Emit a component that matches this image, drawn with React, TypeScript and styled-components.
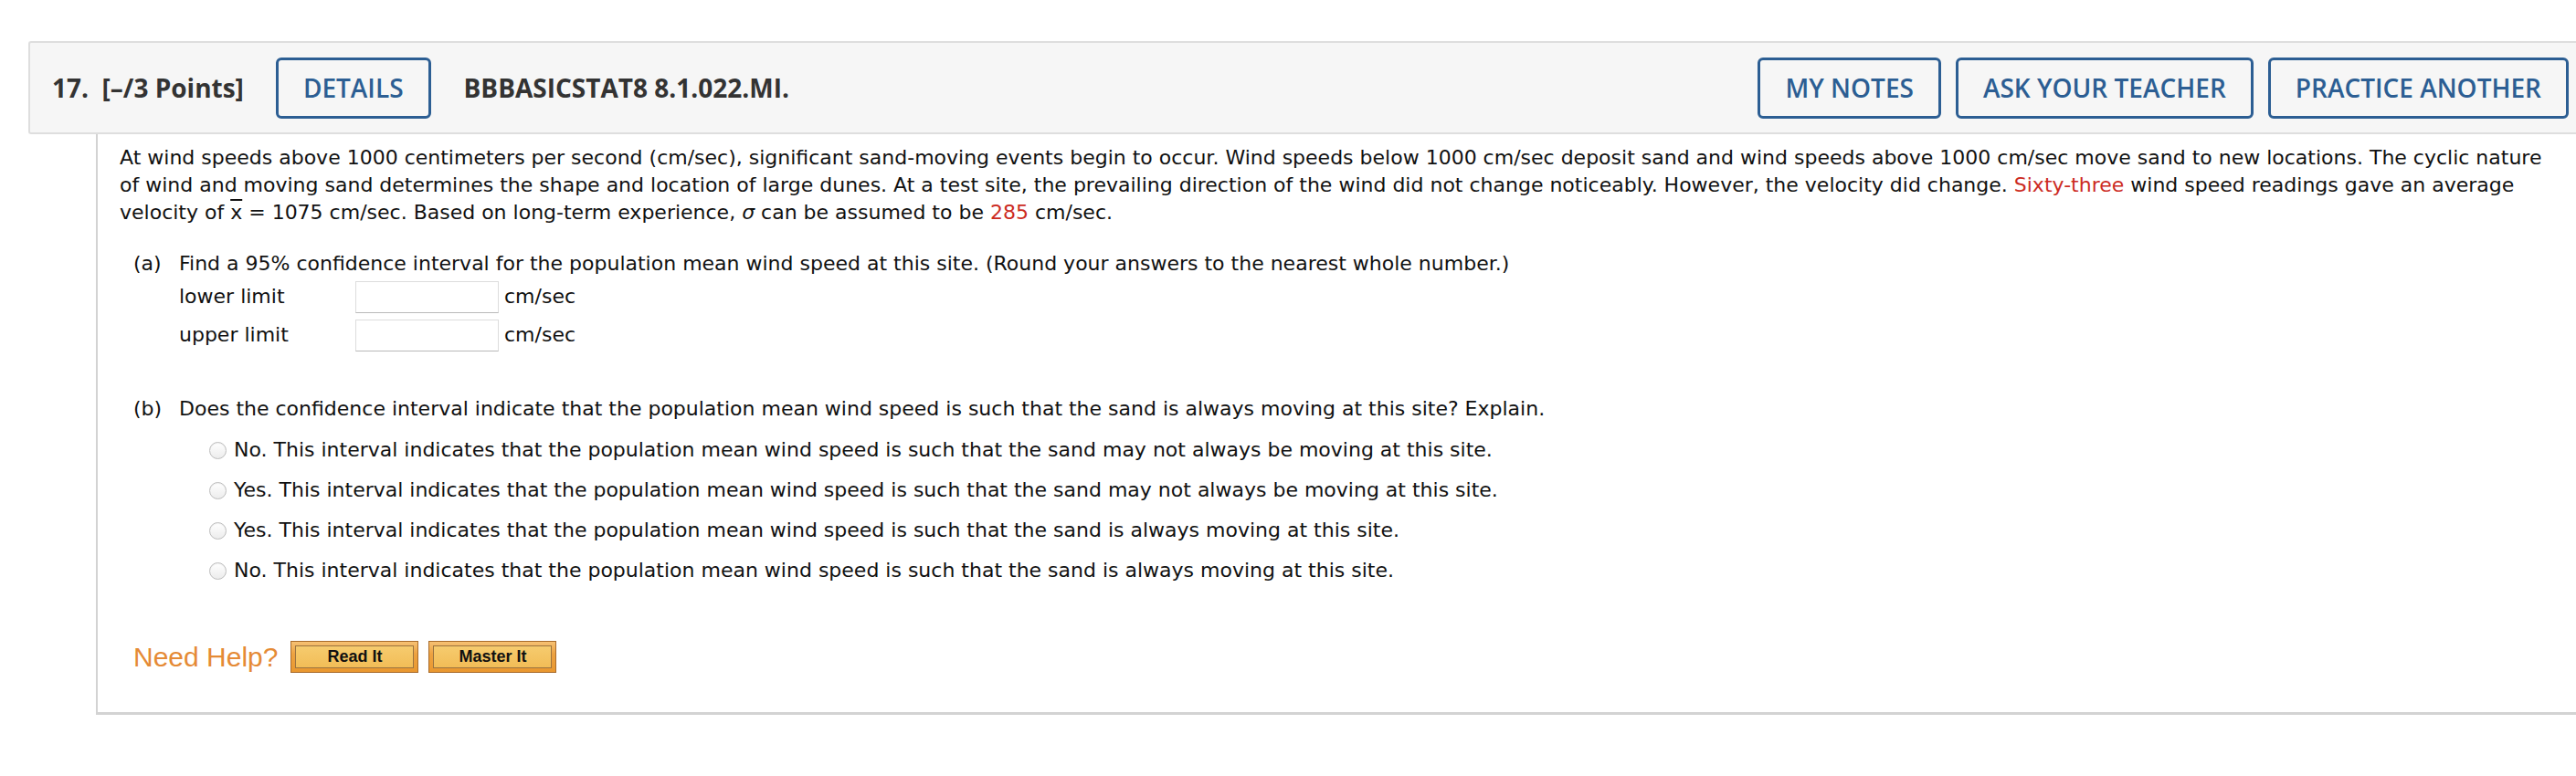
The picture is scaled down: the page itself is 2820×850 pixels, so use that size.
import React from "react";
import styled, { createGlobalStyle } from "styled-components";

const GlobalStyle = createGlobalStyle`
  html, body {
    margin: 0;
    padding: 0;
    background: #ffffff;
    overflow: hidden;
  }
`;

const Page = styled.div`
  width: 2840px;
  box-sizing: border-box;
  padding: 45px 0 0 31px;
`;

const Header = styled.div`
  display: flex;
  align-items: center;
  height: 102px;
  box-sizing: border-box;
  padding: 0 28px 0 24px;
  background: #f6f6f6;
  border: 2px solid #dedede;
  border-right: none;
  border-radius: 3px 0 0 3px;
  font-family: "Open Sans", "Liberation Sans", sans-serif;
  color: #333333;
`;

const QuestionNo = styled.span`
  font-size: 28px;
  font-weight: 700;
  white-space: pre;
`;

const Title = styled.span`
  margin-left: 36px;
  font-size: 28px;
  font-weight: 700;
`;

const Spacer = styled.div`
  flex: 1;
`;

const HeaderButton = styled.button<{ $first?: boolean }>`
  height: 67px;
  margin-left: ${(p) => (p.$first ? "35px" : "16px")};
  padding: 0 27px;
  background: transparent;
  border: 3px solid #2c5e93;
  border-radius: 6px;
  color: #2c5e93;
  font-family: "Open Sans", "Liberation Sans", sans-serif;
  font-size: 28px;
  font-weight: 600;
  text-transform: uppercase;
  cursor: pointer;
`;

const Body = styled.div`
  margin-left: 74px;
  padding: 11px 30px 43px 24px;
  border-left: 2px solid #d3d3d3;
  border-bottom: 3px solid #d3d3d3;
  font-family: "DejaVu Sans", Verdana, sans-serif;
  font-size: 22px;
  line-height: 30px;
  color: #111111;
`;

const Prose = styled.p`
  margin: 0;
`;

const Red = styled.span`
  color: #cc2b1f;
`;

const XBar = styled.span`
  text-decoration: overline;
`;

const Part = styled.div<{ $top: number }>`
  display: grid;
  grid-template-columns: 50px 1fr;
  margin: ${(p) => p.$top}px 0 0 15px;
`;

const PartLabel = styled.span``;

const PartBody = styled.div`
  display: flex;
  flex-direction: column;
`;

const AnswerRow = styled.div`
  display: flex;
  align-items: center;
  height: 42px;
`;

const AnswerLabel = styled.span`
  width: 193px;
`;

const AnswerInput = styled.input`
  width: 157px;
  height: 35px;
  box-sizing: border-box;
  margin: 0 6px 0 0;
  border: 1px solid #dddddd;
  border-bottom-color: #b9b9b9;
  background: #ffffff;
`;

const Choices = styled.div`
  display: flex;
  flex-direction: column;
  margin: 8px 0 0 33px;
`;

const Choice = styled.label`
  display: flex;
  align-items: center;
  height: 44px;
  gap: 8px;
`;

const Radio = styled.span`
  width: 19px;
  height: 19px;
  box-sizing: border-box;
  border-radius: 50%;
  border: 1px solid #bdbdbd;
  background: linear-gradient(#ffffff, #ececec);
  box-shadow: inset 0 1px 1px rgba(0, 0, 0, 0.06);
`;

const HelpRow = styled.div`
  display: flex;
  align-items: center;
  margin: 55px 0 0 15px;
`;

const HelpText = styled.span`
  font-family: "Liberation Sans", Arial, sans-serif;
  font-size: 30px;
  line-height: 35px;
  color: #e58a35;
  margin-right: 14px;
`;

const HelpButton = styled.button`
  width: 140px;
  height: 35px;
  margin-right: 11px;
  padding: 4px;
  box-sizing: border-box;
  background: linear-gradient(#f6c173, #eda241 40%, #e9982f);
  border: 1px solid #a86b2b;
  cursor: pointer;
`;

const HelpButtonFace = styled.span`
  display: flex;
  align-items: center;
  justify-content: center;
  height: 100%;
  box-sizing: border-box;
  background: linear-gradient(#f6cb6e, #f2bd57);
  border: 1px solid #9a7340;
  font-family: "Liberation Sans", Arial, sans-serif;
  font-size: 18px;
  font-weight: 700;
  color: #111111;
`;

const choices = [
  "No. This interval indicates that the population mean wind speed is such that the sand may not always be moving at this site.",
  "Yes. This interval indicates that the population mean wind speed is such that the sand may not always be moving at this site.",
  "Yes. This interval indicates that the population mean wind speed is such that the sand is always moving at this site.",
  "No. This interval indicates that the population mean wind speed is such that the sand is always moving at this site.",
];

export default function App() {
  return (
    <>
      <GlobalStyle />
      <Page>
        <Header>
          <QuestionNo>17.  [–/3 Points]</QuestionNo>
          <HeaderButton $first>Details</HeaderButton>
          <Title>BBBASICSTAT8 8.1.022.MI.</Title>
          <Spacer />
          <HeaderButton>My Notes</HeaderButton>
          <HeaderButton>Ask Your Teacher</HeaderButton>
          <HeaderButton>Practice Another</HeaderButton>
        </Header>
        <Body>
          <Prose>
            At wind speeds above 1000 centimeters per second (cm/sec), significant sand-moving
            events begin to occur. Wind speeds below 1000 cm/sec deposit sand and wind speeds
            above 1000 cm/sec move sand to new locations. The cyclic nature of wind and moving
            sand determines the shape and location of large dunes. At a test site, the prevailing
            direction of the wind did not change noticeably. However, the velocity did change.{" "}
            <Red>Sixty-three</Red> wind speed readings gave an average velocity of <XBar>x</XBar>{" "}
            = 1075 cm/sec. Based on long-term experience, <i>σ</i> can be assumed to be{" "}
            <Red>285</Red> cm/sec.
          </Prose>
          <Part $top={26}>
            <PartLabel>(a)</PartLabel>
            <PartBody>
              <span>
                Find a 95% confidence interval for the population mean wind speed at this site.
                (Round your answers to the nearest whole number.)
              </span>
              <AnswerRow>
                <AnswerLabel>lower limit</AnswerLabel>
                <AnswerInput type="text" />
                <span>cm/sec</span>
              </AnswerRow>
              <AnswerRow>
                <AnswerLabel>upper limit</AnswerLabel>
                <AnswerInput type="text" />
                <span>cm/sec</span>
              </AnswerRow>
            </PartBody>
          </Part>
          <Part $top={45}>
            <PartLabel>(b)</PartLabel>
            <PartBody>
              <span>
                Does the confidence interval indicate that the population mean wind speed is such
                that the sand is always moving at this site? Explain.
              </span>
              <Choices>
                {choices.map((c, i) => (
                  <Choice key={i}>
                    <Radio />
                    {c}
                  </Choice>
                ))}
              </Choices>
            </PartBody>
          </Part>
          <HelpRow>
            <HelpText>Need Help?</HelpText>
            <HelpButton>
              <HelpButtonFace>Read It</HelpButtonFace>
            </HelpButton>
            <HelpButton>
              <HelpButtonFace>Master It</HelpButtonFace>
            </HelpButton>
          </HelpRow>
        </Body>
      </Page>
    </>
  );
}
